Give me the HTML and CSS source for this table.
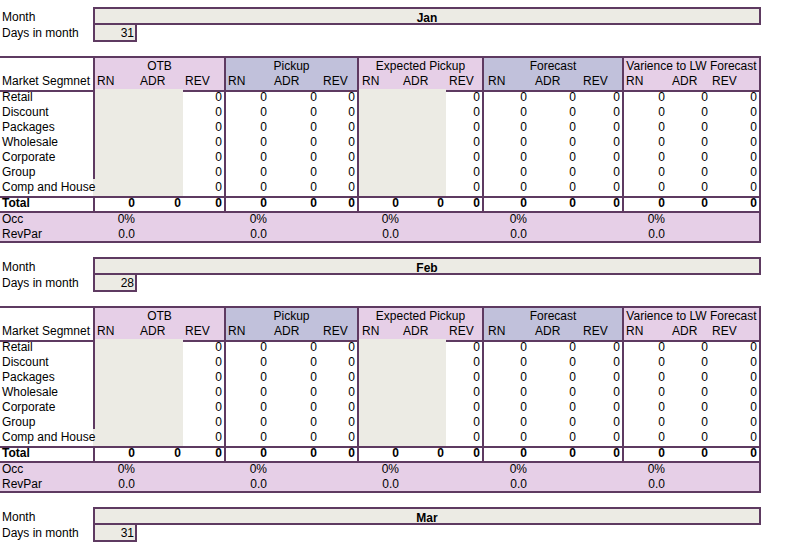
FILE: index.html
```html
<!DOCTYPE html>
<html lang="en">
<head>
<meta charset="utf-8">
<title>Market Segment Forecast</title>
<link rel="stylesheet" href="styles.css">
</head>
<body>

<section class="block">
  <div class="mrow"><div class="lab">Month</div><div class="bar">Jan</div></div>
  <div class="drow"><div class="lab">Days in month</div><div class="days">31</div></div>
  <div class="tbl">
    <div class="row h1"><div></div><div>OTB</div><div>Pickup</div><div>Expected Pickup</div><div>Forecast</div><div>Varience to LW Forecast</div></div>
    <div class="row h2"><div>Market Segmnet</div><div>RN</div><div>ADR</div><div>REV</div><div>RN</div><div>ADR</div><div>REV</div><div>RN</div><div>ADR</div><div>REV</div><div>RN</div><div>ADR</div><div>REV</div><div>RN</div><div>ADR</div><div>REV</div></div>
    <div class="row d"><div>Retail</div><div></div><div></div><div>0</div><div>0</div><div>0</div><div>0</div><div></div><div></div><div>0</div><div>0</div><div>0</div><div>0</div><div>0</div><div>0</div><div>0</div></div>
    <div class="row d"><div>Discount</div><div></div><div></div><div>0</div><div>0</div><div>0</div><div>0</div><div></div><div></div><div>0</div><div>0</div><div>0</div><div>0</div><div>0</div><div>0</div><div>0</div></div>
    <div class="row d"><div>Packages</div><div></div><div></div><div>0</div><div>0</div><div>0</div><div>0</div><div></div><div></div><div>0</div><div>0</div><div>0</div><div>0</div><div>0</div><div>0</div><div>0</div></div>
    <div class="row d"><div>Wholesale</div><div></div><div></div><div>0</div><div>0</div><div>0</div><div>0</div><div></div><div></div><div>0</div><div>0</div><div>0</div><div>0</div><div>0</div><div>0</div><div>0</div></div>
    <div class="row d"><div>Corporate</div><div></div><div></div><div>0</div><div>0</div><div>0</div><div>0</div><div></div><div></div><div>0</div><div>0</div><div>0</div><div>0</div><div>0</div><div>0</div><div>0</div></div>
    <div class="row d"><div>Group</div><div></div><div></div><div>0</div><div>0</div><div>0</div><div>0</div><div></div><div></div><div>0</div><div>0</div><div>0</div><div>0</div><div>0</div><div>0</div><div>0</div></div>
    <div class="row d last"><div>Comp and House</div><div></div><div></div><div>0</div><div>0</div><div>0</div><div>0</div><div></div><div></div><div>0</div><div>0</div><div>0</div><div>0</div><div>0</div><div>0</div><div>0</div></div>
    <div class="row tot"><div>Total</div><div>0</div><div>0</div><div>0</div><div>0</div><div>0</div><div>0</div><div>0</div><div>0</div><div>0</div><div>0</div><div>0</div><div>0</div><div>0</div><div>0</div><div>0</div></div>
    <div class="row occ"><div>Occ</div><div>0%</div><div class="sp"></div><div>0%</div><div class="sp"></div><div>0%</div><div class="sp"></div><div>0%</div><div class="sp"></div><div>0%</div><div class="sp"></div></div>
    <div class="row occ"><div>RevPar</div><div>0.0</div><div class="sp"></div><div>0.0</div><div class="sp"></div><div>0.0</div><div class="sp"></div><div>0.0</div><div class="sp"></div><div>0.0</div><div class="sp"></div></div>
  </div>
</section>

<section class="block">
  <div class="mrow"><div class="lab">Month</div><div class="bar">Feb</div></div>
  <div class="drow"><div class="lab">Days in month</div><div class="days">28</div></div>
  <div class="tbl">
    <div class="row h1"><div></div><div>OTB</div><div>Pickup</div><div>Expected Pickup</div><div>Forecast</div><div>Varience to LW Forecast</div></div>
    <div class="row h2"><div>Market Segmnet</div><div>RN</div><div>ADR</div><div>REV</div><div>RN</div><div>ADR</div><div>REV</div><div>RN</div><div>ADR</div><div>REV</div><div>RN</div><div>ADR</div><div>REV</div><div>RN</div><div>ADR</div><div>REV</div></div>
    <div class="row d"><div>Retail</div><div></div><div></div><div>0</div><div>0</div><div>0</div><div>0</div><div></div><div></div><div>0</div><div>0</div><div>0</div><div>0</div><div>0</div><div>0</div><div>0</div></div>
    <div class="row d"><div>Discount</div><div></div><div></div><div>0</div><div>0</div><div>0</div><div>0</div><div></div><div></div><div>0</div><div>0</div><div>0</div><div>0</div><div>0</div><div>0</div><div>0</div></div>
    <div class="row d"><div>Packages</div><div></div><div></div><div>0</div><div>0</div><div>0</div><div>0</div><div></div><div></div><div>0</div><div>0</div><div>0</div><div>0</div><div>0</div><div>0</div><div>0</div></div>
    <div class="row d"><div>Wholesale</div><div></div><div></div><div>0</div><div>0</div><div>0</div><div>0</div><div></div><div></div><div>0</div><div>0</div><div>0</div><div>0</div><div>0</div><div>0</div><div>0</div></div>
    <div class="row d"><div>Corporate</div><div></div><div></div><div>0</div><div>0</div><div>0</div><div>0</div><div></div><div></div><div>0</div><div>0</div><div>0</div><div>0</div><div>0</div><div>0</div><div>0</div></div>
    <div class="row d"><div>Group</div><div></div><div></div><div>0</div><div>0</div><div>0</div><div>0</div><div></div><div></div><div>0</div><div>0</div><div>0</div><div>0</div><div>0</div><div>0</div><div>0</div></div>
    <div class="row d last"><div>Comp and House</div><div></div><div></div><div>0</div><div>0</div><div>0</div><div>0</div><div></div><div></div><div>0</div><div>0</div><div>0</div><div>0</div><div>0</div><div>0</div><div>0</div></div>
    <div class="row tot"><div>Total</div><div>0</div><div>0</div><div>0</div><div>0</div><div>0</div><div>0</div><div>0</div><div>0</div><div>0</div><div>0</div><div>0</div><div>0</div><div>0</div><div>0</div><div>0</div></div>
    <div class="row occ"><div>Occ</div><div>0%</div><div class="sp"></div><div>0%</div><div class="sp"></div><div>0%</div><div class="sp"></div><div>0%</div><div class="sp"></div><div>0%</div><div class="sp"></div></div>
    <div class="row occ"><div>RevPar</div><div>0.0</div><div class="sp"></div><div>0.0</div><div class="sp"></div><div>0.0</div><div class="sp"></div><div>0.0</div><div class="sp"></div><div>0.0</div><div class="sp"></div></div>
  </div>
</section>

<section class="block">
  <div class="mrow"><div class="lab">Month</div><div class="bar">Mar</div></div>
  <div class="drow"><div class="lab">Days in month</div><div class="days">31</div></div>
</section>

</body>
</html>
```

FILE: styles.css
```css
:root {
  --line: #5e3a61;
  --pink: #e6cfe7;
  --blue: #c1c1db;
  --grey: #ecebe4;
}

html {
  overflow: hidden;
}

body {
  margin: 0;
  background: #fff;
  color: #000;
  font-family: "Liberation Sans", Arial, sans-serif;
  font-size: 12px;
}

.block {
  width: 761px;
  padding: 7px 0;
}

.mrow,
.drow {
  display: flex;
}

.mrow {
  height: 18px;
}

.drow {
  height: 17px;
}

.lab {
  flex: none;
  width: 93px;
  box-sizing: border-box;
  padding-left: 2px;
  line-height: 17px;
  white-space: nowrap;
}

.mrow .lab {
  padding-top: 2px;
}

.bar {
  flex: 1;
  box-sizing: border-box;
  border: 2px solid var(--line);
  background: var(--grey);
  text-align: center;
  font-weight: bold;
  line-height: 17px;
  padding-top: 1px;
}

.days {
  width: 44px;
  box-sizing: border-box;
  border: 2px solid var(--line);
  border-top: 0;
  background: var(--grey);
  text-align: right;
  padding-right: 1px;
  line-height: 17px;
}

.tbl {
  margin-top: 14px;
  width: 761px;
  box-sizing: border-box;
  border: 2px solid var(--line);
  border-left: 0;
}

.row {
  display: grid;
  grid-template-columns: 93px 44px 46px 41px 45px 50px 38px 44px 45px 36px 47px 49px 44px 45px 43px 49px;
  height: 15px;
  line-height: 17px;
}

.row > * {
  box-sizing: border-box;
  white-space: nowrap;
  text-align: right;
  padding-right: 2px;
}

.row > :first-child {
  text-align: left;
  padding: 0 0 0 2px;
}

/* group header row */
.h1 > :nth-child(n+2) {
  grid-column: span 3;
  text-align: center;
  padding: 0;
  border-left: 2px solid var(--line);
  background: var(--pink);
}

.h1 > :nth-child(odd):not(:first-child) {
  background: var(--blue);
}

/* column header row */
.h2 {
  height: 16px;
}

.h2 > * {
  border-bottom: 2px solid var(--line);
  text-align: left;
  padding-right: 0;
  background: var(--pink);
}

.h2 > :first-child {
  background: none;
}

.h2 > :nth-child(n+5):nth-child(-n+7),
.h2 > :nth-child(n+11):nth-child(-n+13) {
  background: var(--blue);
}

.h2 > :nth-child(2) { padding-left: 2px; }
.h2 > :nth-child(3) { padding-left: 3px; }
.h2 > :nth-child(4) { padding-left: 2px; }
.h2 > :nth-child(5) { padding-left: 2px; }
.h2 > :nth-child(6) { padding-left: 5px; }
.h2 > :nth-child(7) { padding-left: 4px; }
.h2 > :nth-child(8) { padding-left: 3px; }
.h2 > :nth-child(9) { padding-left: 2px; }
.h2 > :nth-child(10) { padding-left: 3px; }
.h2 > :nth-child(11) { padding-left: 4px; }
.h2 > :nth-child(12) { padding-left: 6px; }
.h2 > :nth-child(13) { padding-left: 5px; }
.h2 > :nth-child(14) { padding-left: 2px; }
.h2 > :nth-child(15) { padding-left: 5px; }
.h2 > :nth-child(16) { padding-left: 2px; }

/* group separators */
.h2 > :nth-child(3n+2),
.d > :nth-child(3n+2),
.tot > :nth-child(3n+2) {
  border-left: 2px solid var(--line);
}

/* data rows */
.d > :nth-child(2),
.d > :nth-child(3),
.d > :nth-child(8),
.d > :nth-child(9) {
  background: var(--grey);
}

.last {
  height: 17px;
}

.last > * {
  border-bottom: 2px solid var(--line);
}

.last > :first-child {
  z-index: 1;
}

.last > :nth-child(2) {
  border-left-color: transparent;
}

/* totals */
.tot {
  height: 15px;
  line-height: 15px;
  font-weight: bold;
}

.tot > * {
  border-bottom: 2px solid var(--line);
}

/* occupancy band */
.occ {
  background: var(--pink);
}

.occ > .sp {
  grid-column: span 2;
}
```
